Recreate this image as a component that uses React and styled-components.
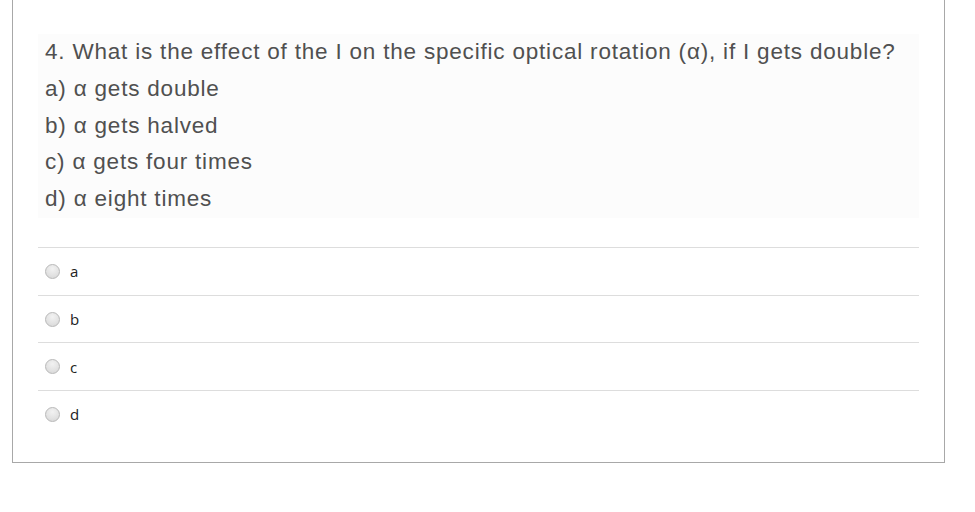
import React from "react";
import styled, { createGlobalStyle } from "styled-components";

const GlobalStyle = createGlobalStyle`
  body {
    margin: 0;
    background: #ffffff;
  }
`;

const Card = styled.div`
  box-sizing: border-box;
  width: 933px;
  margin-left: 12px;
  padding: 34px 25px 24px 25px;
  border: 1px solid #a8a8a8;
  border-top: none;
  background: #fff;
`;

const Question = styled.div`
  background: #fcfcfc;
  padding: 0 7px;
  font-family: "Liberation Sans", Arial, sans-serif;
  font-size: 22.5px;
  letter-spacing: 0.8px;
  line-height: 36.8px;
  color: #505050;
`;

const Line = styled.div`
  white-space: nowrap;
`;

const Options = styled.div`
  margin-top: 29px;
`;

const Row = styled.label`
  display: flex;
  align-items: center;
  gap: 10px;
  height: 46.7px;
  padding-left: 7px;
  border-top: 1px solid #dddddd;
  font-family: "Open Sans", "DejaVu Sans", sans-serif;
  font-size: 15px;
  color: #222;
`;

const Radio = styled.span`
  box-sizing: border-box;
  width: 15px;
  height: 15px;
  border-radius: 50%;
  border: 1px solid #b8b8b8;
  background: radial-gradient(circle at 50% 30%, #f2f2f2 0%, #e3e3e3 55%, #d4d4d4 100%);
  flex-shrink: 0;
`;

const lines = [
  "4. What is the effect of the I on the specific optical rotation (\u03b1), if I gets double?",
  "a) \u03b1 gets double",
  "b) \u03b1 gets halved",
  "c) \u03b1 gets four times",
  "d) \u03b1 eight times",
];

const choices = ["a", "b", "c", "d"];

export default function App() {
  return (
    <>
      <GlobalStyle />
      <Card>
        <Question>
          {lines.map((l) => (
            <Line key={l}>{l}</Line>
          ))}
        </Question>
        <Options>
          {choices.map((c) => (
            <Row key={c}>
              <Radio />
              <span>{c}</span>
            </Row>
          ))}
        </Options>
      </Card>
    </>
  );
}
